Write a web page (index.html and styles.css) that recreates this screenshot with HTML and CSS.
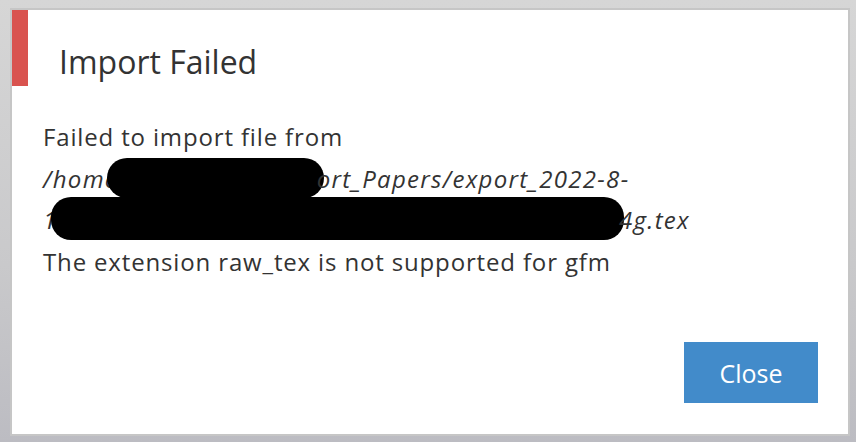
FILE: index.html
```html
<!DOCTYPE html>
<html>
<head>
<meta charset="utf-8">
<link rel="stylesheet" href="styles.css">
</head>
<body>
<div class="dialog">
  <div class="header">
    <div class="accent"></div>
    <h1 class="title">Import Failed</h1>
  </div>
  <div class="content">
    <div class="line">Failed to import file from</div>
    <div class="line path">/home<span class="redact r1"></span>ort_Papers/export_2022-8-</div>
    <div class="line path">1<span class="redact r2"></span>4g.tex</div>
    <div class="line">The extension raw_tex is not supported for gfm</div>
  </div>
  <div class="footer">
    <button class="btn">Close</button>
  </div>
</div>
</body>
</html>
```
FILE: styles.css
```css
html, body {
  margin: 0;
  padding: 0;
  height: 100%;
}
body {
  background: linear-gradient(to bottom, #d6d6d6 0%, #c9c9cb 60%, #bcbcc2 100%);
  font-family: "Open Sans", "Noto Sans", sans-serif;
  color: #333;
  padding: 8px 6px 6px 10px;
  box-sizing: border-box;
}
.dialog {
  background: #fff;
  border: 2px solid #c6c6c6;
  height: 428px;
  box-sizing: border-box;
  display: flex;
  flex-direction: column;
}
.header {
  display: flex;
  align-items: flex-start;
  height: 76px;
}
.accent {
  width: 16px;
  height: 76px;
  background: #d9534f;
}
.title {
  margin: 0 0 0 31px;
  font-size: 32px;
  font-weight: 400;
  line-height: 44px;
  padding-top: 30px;
  color: #333;
  letter-spacing: 0;
}
.content {
  padding: 30px 31px 0 31px;
  font-size: 24px;
  line-height: 41.7px;
  letter-spacing: 0.85px;
}
.line {
  white-space: nowrap;
}
.path {
  font-style: italic;
  letter-spacing: 1.3px;
}
.redact {
  display: inline-block;
  vertical-align: top;
  background: #000;
  border-radius: 20px;
}
.r1 {
  width: 217px;
  height: 40px;
  margin: 0 -7px 0 -11.5px;
}
.r2 {
  width: 573px;
  height: 43px;
  margin: -2px -5px 0 -6.5px;
}
.footer {
  margin-top: auto;
  display: flex;
  justify-content: flex-end;
  padding: 0 30px 31px 0;
}
.btn {
  width: 134px;
  height: 61px;
  background: #428bca;
  color: #fff;
  border: none;
  font-family: "Open Sans", "Noto Sans", sans-serif;
  font-size: 25px;
  padding: 0;
  margin: 0;
  cursor: pointer;
}
```
